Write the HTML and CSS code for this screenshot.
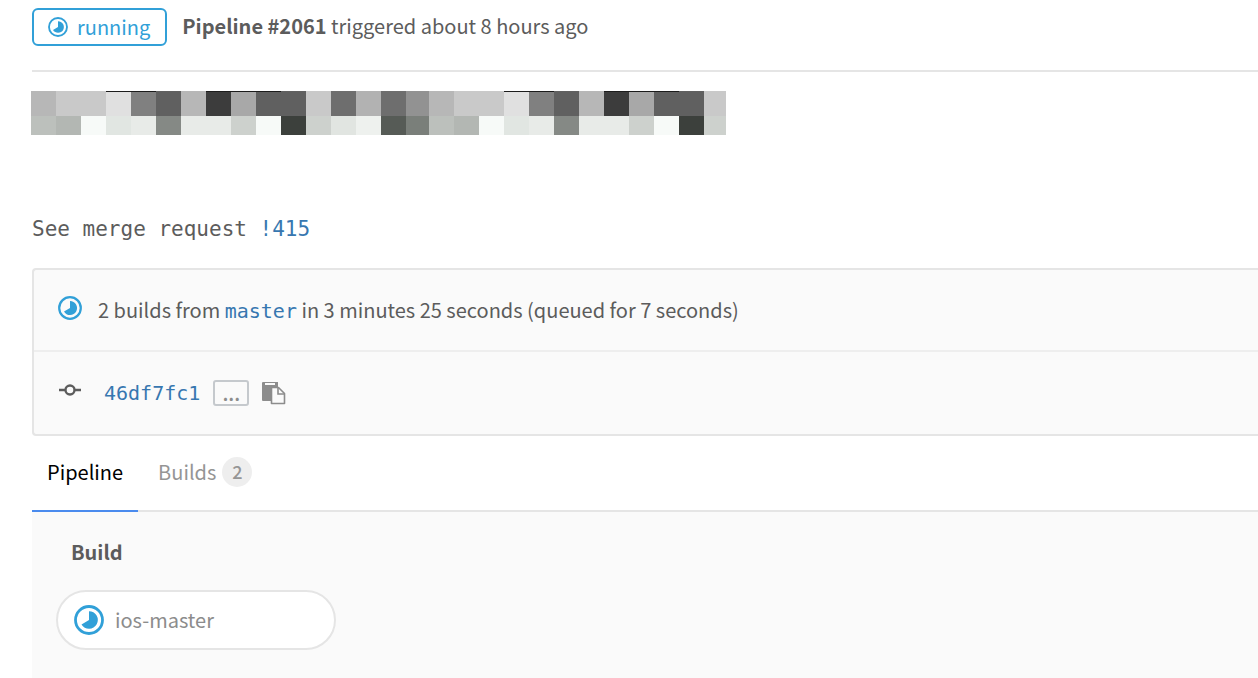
FILE: index.html
```html
<!DOCTYPE html>
<html lang="en">
<head>
<meta charset="utf-8">
<meta name="viewport" content="width=device-width, initial-scale=1">
<title>Pipeline #2061</title>
<link rel="stylesheet" href="styles.css">
</head>
<body>
<svg class="sprite" aria-hidden="true">
  <symbol id="running" viewBox="0 0 14 14">
    <circle cx="7" cy="7" r="6.3" fill="none" stroke="currentColor" stroke-width="1.3"/>
    <path fill="currentColor" d="M7 2.900a4.100 4.100 0 1 1-3.500 6.200L7 7z"/>
  </symbol>
</svg>
<main class="page">
  <header class="page-header">
    <a class="status" href="#"><svg class="icon-small"><use href="#running"/></svg>running</a>
    <span><strong>Pipeline #2061</strong> triggered about 8 hours ago</span>
  </header>

  <section class="commit">
    <svg class="mosaic" viewBox="0 0 695 44" width="695" height="44" shape-rendering="crispEdges" role="img" aria-label="Redacted commit title">
      <defs>
        <g id="tiles">
          <path fill="#b7b7b7" d="M0 0h25v25H0zM150 0h25v25h-25z"/>
          <path fill="#c9c9c9" d="M25 0h50v25H25zM275 0h25v25h-25z"/>
          <path fill="#e0e0e0" d="M75 0h25v25H75z"/>
          <path fill="#808080" d="M100 0h25v25h-25z"/>
          <path fill="#606060" d="M125 0h25v25h-25zM225 0h50v25h-50z"/>
          <path fill="#3c3c3c" d="M175 0h25v25h-25z"/>
          <path fill="#a8a8a8" d="M200 0h25v25h-25z"/>
          <path fill="#bcc0bc" d="M0 25h25v19H0z"/>
          <path fill="#b3b7b3" d="M25 25h25v19H25z"/>
          <path fill="#f7faf8" d="M50 25h25v19H50zM225 25h25v19h-25z"/>
          <path fill="#e1e6e2" d="M75 25h25v19H75z"/>
          <path fill="#e8ebe8" d="M100 25h25v19h-25zM150 25h50v19h-50z"/>
          <path fill="#858985" d="M125 25h25v19h-25z"/>
          <path fill="#cdd1cd" d="M200 25h25v19h-25zM275 25h25v19h-25z"/>
          <path fill="#3c403c" d="M250 25h25v19h-25z"/>
          <path fill="#1c1c1c" d="M75 0h50v1H75zM175 0h75v1h-75z"/>
        </g>
      </defs>
      <use href="#tiles"/>
      <path fill="#6e6e6e" d="M300 0h25v25h-25zM350 0h25v25h-25z"/>
      <path fill="#b2b2b2" d="M325 0h25v25h-25z"/>
      <path fill="#929292" d="M375 0h25v25h-25z"/>
      <path fill="#e1e5e1" d="M300 25h25v19h-25z"/>
      <path fill="#eef1ee" d="M325 25h25v19h-25z"/>
      <path fill="#565b56" d="M350 25h25v19h-25z"/>
      <path fill="#7a7f7a" d="M375 25h25v19h-25z"/>
      <use href="#tiles" x="398"/>
    </svg>
    <p class="description">See merge request <a href="#">!415</a></p>
  </section>

  <section class="info">
    <div class="info-row">
      <svg class="icon-medium"><use href="#running"/></svg>
      <span class="summary">2 builds from <a class="ref" href="#">master</a> in 3 minutes 25 seconds (queued for 7 seconds)</span>
    </div>
    <div class="info-row">
      <svg class="icon-medium icon-commit" viewBox="0 0 24 24" aria-hidden="true">
        <path d="M1 11h6M17 11h6M7.500 11a4.500 4.500 0 1 0 9 0a4.500 4.500 0 1 0-9 0" fill="none" stroke="currentColor" stroke-width="2.400"/>
      </svg>
      <div class="sha-group">
        <a class="ref" href="#">46df7fc1</a>
        <button class="expand" type="button" aria-label="Show commit details">...</button>
        <button class="copy" type="button" aria-label="Copy commit SHA">
          <svg width="24" height="24" viewBox="0 0 24 24" aria-hidden="true">
            <path fill="currentColor" d="M1 1h15v5H9v14H1a1 1 0 0 1-1-1V2a1 1 0 0 1 1-1z"/>
            <path fill="#fafafa" d="M3 2h10v2H3z"/>
            <path fill="#fafafa" stroke="currentColor" stroke-width="1.600" stroke-linejoin="round" d="M9.500 6.500h7l6 6v10h-13z"/>
            <path fill="none" stroke="currentColor" stroke-width="1.600" d="M16 6.500V13h6.500"/>
          </svg>
        </button>
      </div>
    </div>
  </section>

  <nav class="tabs">
    <a class="tab active" href="#">Pipeline</a>
    <a class="tab" href="#">Builds <span class="badge">2</span></a>
  </nav>

  <section class="graph">
    <div class="stage">
      <h2 class="stage-name">Build</h2>
      <a class="job" href="#"><svg class="icon-large"><use href="#running"/></svg>ios-master</a>
    </div>
  </section>
</main>
</body>
</html>
```

FILE: styles.css
```css
* {
  box-sizing: border-box;
}

body {
  margin: 0;
  background: #fff;
  color: #5c5c5c;
  font: 20px/30px "Noto Sans CJK SC", "Open Sans", sans-serif;
  overflow: hidden;
}

a {
  color: #3777b0;
  text-decoration: none;
}

button {
  margin: 0;
  padding: 0;
  font: inherit;
  cursor: pointer;
}

svg {
  flex: none;
}

.sprite {
  position: absolute;
  width: 0;
  height: 0;
}

.page {
  display: flex;
  flex-direction: column;
  min-height: 100vh;
  padding-left: 32px;
}

.page-header {
  display: flex;
  align-items: center;
  gap: 15px;
  padding: 8px 0 24px;
  border-bottom: 2px solid #e5e5e5;
}

.page-header > span {
  padding-bottom: 2px;
}

.status {
  display: flex;
  align-items: center;
  gap: 9px;
  height: 38px;
  padding: 0 15px 0 14px;
  border: 2px solid #31a0d8;
  border-radius: 6px;
  color: #31a0d8;
}

.icon-small {
  width: 20px;
  height: 20px;
}

.icon-medium {
  width: 24px;
  height: 24px;
  margin-bottom: 4px;
  color: #31a0d8;
}

.icon-large {
  width: 30px;
  height: 30px;
  color: #31a0d8;
}

.icon-commit {
  color: #5c5c5c;
}

.commit {
  padding: 19px 0 24px;
}

.mosaic {
  display: block;
  margin-left: -1px;
}

.description {
  margin: 79px 0 0;
  font: 21px/30px "DejaVu Sans Mono", monospace;
}

.info {
  border: 2px solid #e5e5e5;
  border-right: 0;
  border-radius: 4px 0 0 4px;
  background: #fafafa;
}

.info-row {
  display: flex;
  align-items: center;
  gap: 16px;
  height: 80px;
  padding: 0 24px;
}

.info-row + .info-row {
  height: 84px;
  border-top: 2px solid #eee;
}

.ref {
  font: 20px/30px "DejaVu Sans Mono", monospace;
}

.sha-group {
  display: flex;
  align-items: center;
  gap: 13px;
  padding-left: 6px;
}

.expand {
  width: 36px;
  height: 26px;
  border: 2px solid #c5c9cd;
  border-radius: 3px;
  background: transparent;
  color: #8c8c8c;
  font-weight: 500;
  line-height: 18px;
}

.copy {
  display: flex;
  border: 0;
  background: none;
  color: #8c8c8c;
}

.tabs {
  display: flex;
  border-bottom: 2px solid #e5e5e5;
}

.tab {
  display: flex;
  align-items: center;
  gap: 6px;
  height: 76px;
  margin-bottom: -2px;
  padding: 0 20px 4px;
  color: #959595;
}

.active {
  padding: 0 15px 2px;
  border-bottom: 2px solid #4a8bee;
  color: #000;
}

.badge {
  width: 30px;
  height: 30px;
  border-radius: 15px;
  background: #eee;
  font-size: 18px;
  font-weight: 500;
  line-height: 28px;
  text-align: center;
}

.graph {
  flex: 1;
  padding: 25px 24px;
  background: #fafafa;
}

.stage {
  width: 280px;
}

.stage-name {
  margin: 0 0 23px 15px;
  font-size: 20px;
  line-height: 30px;
}

.job {
  display: flex;
  align-items: center;
  gap: 11px;
  height: 60px;
  padding: 0 16px;
  border: 2px solid #e5e5e5;
  border-radius: 30px;
  background: #fff;
  color: #8c8c8c;
}
```
